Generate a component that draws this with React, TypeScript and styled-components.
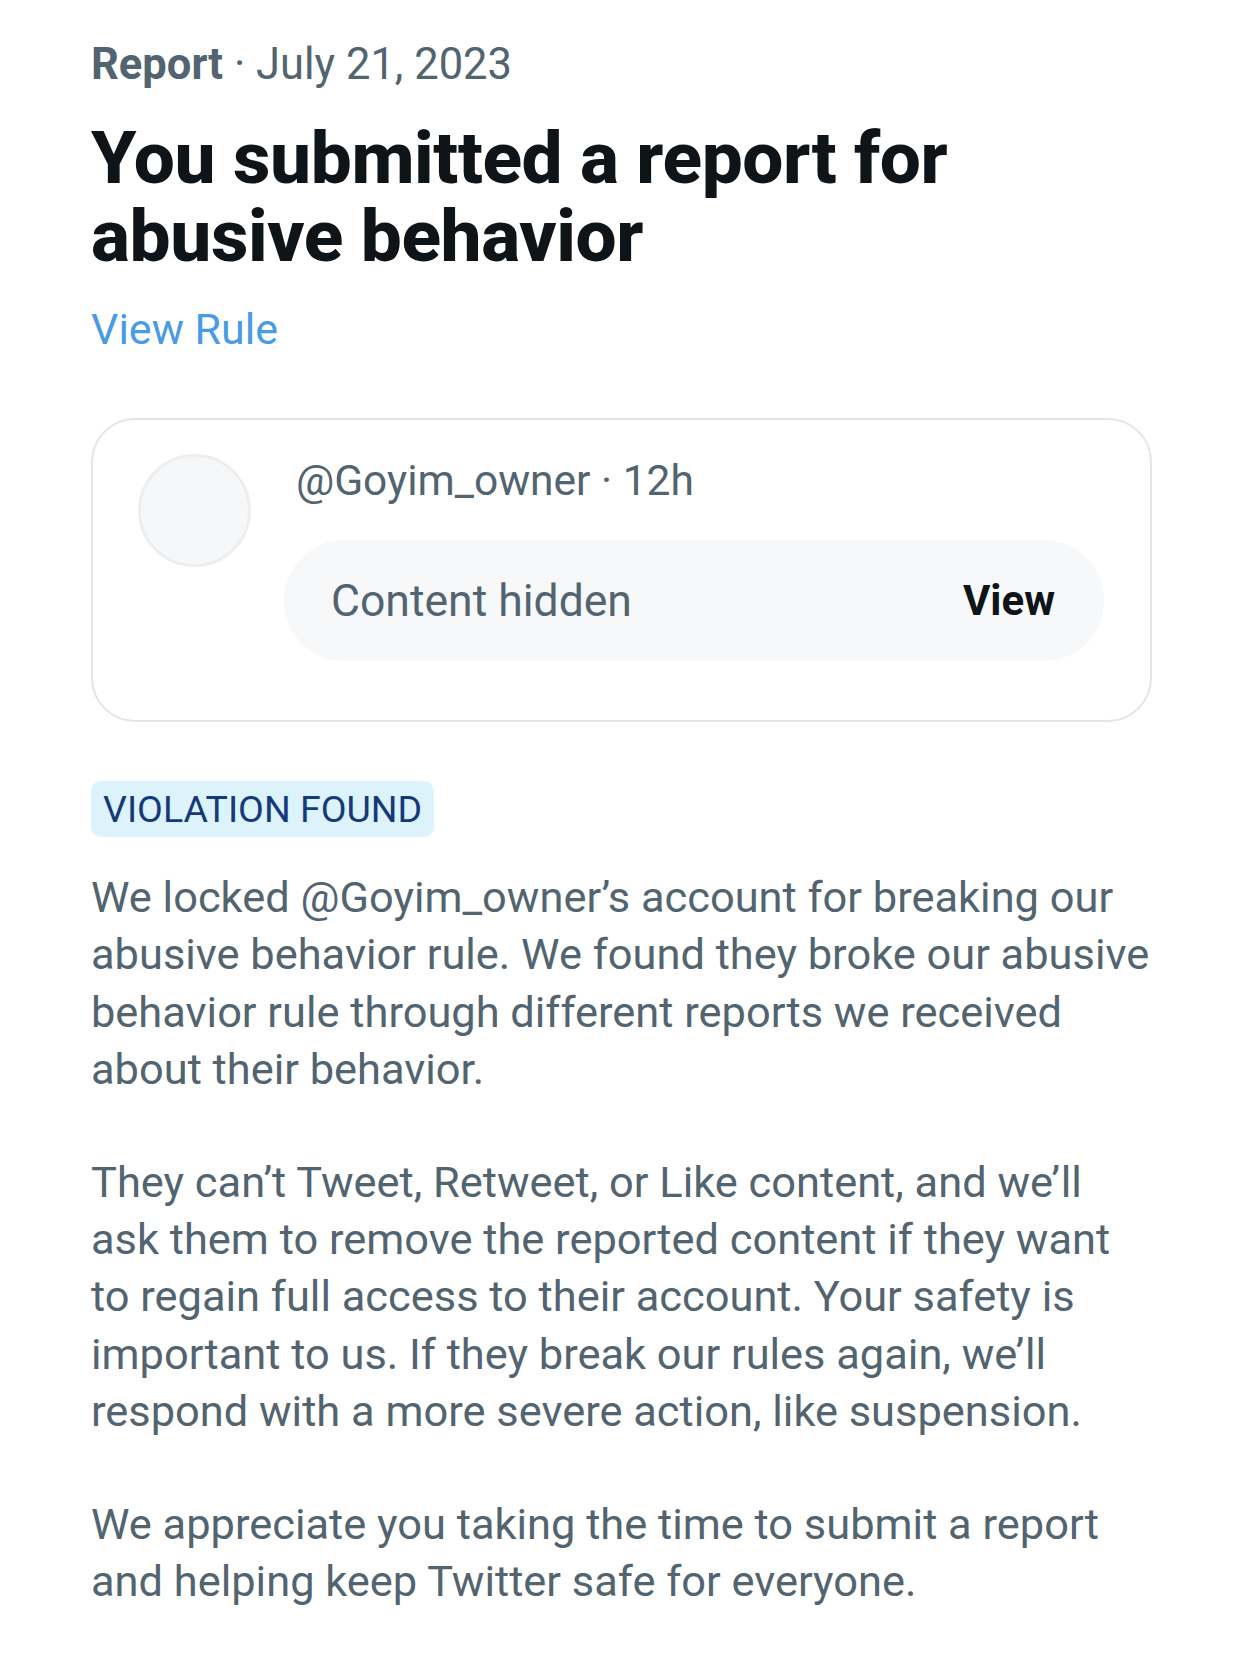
import styled, { createGlobalStyle } from "styled-components";

const GlobalStyle = createGlobalStyle`
  html, body {
    margin: 0;
    padding: 0;
    background: #ffffff;
  }
  body {
    font-family: Roboto, "Liberation Sans", sans-serif;
    -webkit-font-smoothing: antialiased;
  }
`;

function App() {
  return (
    <Page>
      <GlobalStyle />
      <Meta>
        <strong>Report</strong> · July 21, 2023
      </Meta>
      <Title>You submitted a report for abusive behavior</Title>
      <RuleLink href="#">View Rule</RuleLink>

      <Card>
        <Avatar />
        <CardBody>
          <Handle>@Goyim_owner · 12h</Handle>
          <Hidden>
            <HiddenLabel>Content hidden</HiddenLabel>
            <ViewButton>View</ViewButton>
          </Hidden>
        </CardBody>
      </Card>

      <Badge>VIOLATION FOUND</Badge>

      <Body>
        <p>
          We locked @Goyim_owner’s account for breaking our abusive behavior
          rule. We found they broke our abusive behavior rule through different
          reports we received about their behavior.
        </p>
        <p>
          They can’t Tweet, Retweet, or Like content, and we’ll ask them to
          remove the reported content if they want to regain full access to
          their account. Your safety is important to us. If they break our rules
          again, we’ll respond with a more severe action, like suspension.
        </p>
        <p>
          We appreciate you taking the time to submit a report and helping keep
          Twitter safe for everyone.
        </p>
      </Body>
    </Page>
  );
}

const Page = styled.div`
  display: flex;
  flex-direction: column;
  align-items: flex-start;
  width: 1064px;
  padding: 36px 0 60px 91px;
  color: #536471;
`;

const Meta = styled.div`
  font-size: 43.5px;
  line-height: 57px;
  color: #536471;

  strong {
    font-weight: 700;
  }
`;

const Title = styled.h1`
  margin: 26px 0 0;
  width: 1000px;
  font-size: 73px;
  line-height: 78px;
  font-weight: 800;
  letter-spacing: -0.4px;
  color: #0f1419;
`;

const RuleLink = styled.a`
  margin-top: 26px;
  font-size: 43px;
  line-height: 57px;
  color: #4a9be6;
  text-decoration: none;
`;

const Card = styled.div`
  margin-top: 60px;
  box-sizing: border-box;
  width: 1061px;
  display: flex;
  gap: 33px;
  padding: 32px 46px 59px 45px;
  border: 2px solid #e3e6e9;
  border-radius: 44px;
`;

const Avatar = styled.div`
  flex: none;
  box-sizing: border-box;
  width: 113px;
  height: 113px;
  margin-top: 2px;
  border-radius: 50%;
  background: #f6f7f8;
  border: 3px solid #eceef0;
`;

const CardBody = styled.div`
  flex: 1;
  display: flex;
  flex-direction: column;
  gap: 31px;
`;

const Handle = styled.div`
  padding-left: 12px;
  font-size: 42.5px;
  line-height: 57px;
  color: #536471;
`;

const Hidden = styled.div`
  display: flex;
  align-items: center;
  justify-content: space-between;
  height: 121px;
  padding: 0 49px 0 47px;
  border-radius: 60px;
  background: #f7f8f9;
`;

const HiddenLabel = styled.span`
  font-size: 44.5px;
  color: #536471;
`;

const ViewButton = styled.span`
  font-size: 42px;
  font-weight: 700;
  color: #0f1419;
`;

const Badge = styled.div`
  margin-top: 59px;
  padding: 0 12px;
  height: 56px;
  display: flex;
  align-items: center;
  border-radius: 10px;
  background: #dcf3fb;
  color: #15397a;
  font-size: 37.5px;
`;

const Body = styled.div`
  margin-top: 32px;
  width: 1064px;
  font-size: 43.4px;
  line-height: 57.4px;
  color: #536471;

  p {
    margin: 0 0 55px;
  }
`;

export default App;
